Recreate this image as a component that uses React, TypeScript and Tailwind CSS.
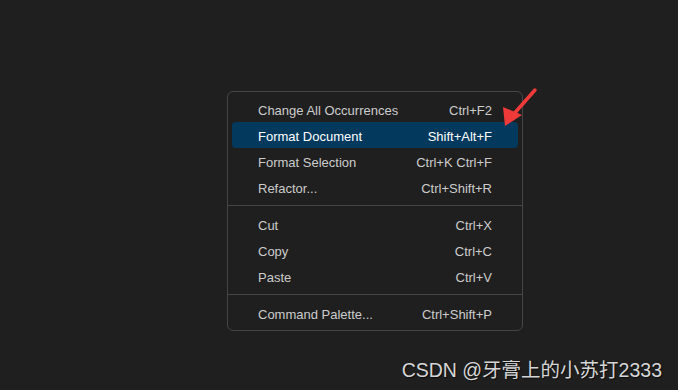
const items1 = [
  { label: 'Change All Occurrences', key: 'Ctrl+F2' },
  { label: 'Format Document', key: 'Shift+Alt+F', active: true },
  { label: 'Format Selection', key: 'Ctrl+K Ctrl+F' },
  { label: 'Refactor...', key: 'Ctrl+Shift+R' },
]
const items2 = [
  { label: 'Cut', key: 'Ctrl+X' },
  { label: 'Copy', key: 'Ctrl+C' },
  { label: 'Paste', key: 'Ctrl+V' },
]
const items3 = [{ label: 'Command Palette...', key: 'Ctrl+Shift+P' }]

type Item = { label: string; key: string; active?: boolean }

function Row({ item }: { item: Item }) {
  return (
    <div
      className={`flex h-[26px] items-center justify-between rounded-[4px] px-[26px] pt-[4px] ${
        item.active ? 'bg-[#04395e] text-white' : 'text-[#cccccc]'
      }`}
    >
      <span>{item.label}</span>
      <span>{item.key}</span>
    </div>
  )
}

function Separator() {
  return (
    <div className="-mx-[4px] flex h-[11px] items-start pt-[5px]">
      <div className="h-px w-full bg-[#454545]" />
    </div>
  )
}

export default function App() {
  return (
    <div
      className="relative h-[390px] w-[678px] overflow-hidden bg-[#1f1f1f] text-[13px]"
      style={{ fontFamily: '"Liberation Sans", Arial, sans-serif' }}
    >
      <div className="pl-[227px] pt-[91px]">
        {/* context menu */}
        <div className="w-[296px] rounded-[6px] border border-[#454545] bg-[#1f1f1f] p-[4px]">
          {items1.map((it) => (
            <Row key={it.label} item={it} />
          ))}
          <Separator />
          {items2.map((it) => (
            <Row key={it.label} item={it} />
          ))}
          <Separator />
          {items3.map((it) => (
            <Row key={it.label} item={it} />
          ))}
        </div>
      </div>

      {/* red annotation arrow */}
      <svg className="absolute left-0 top-0" width="678" height="390">
        <line x1="535" y1="90" x2="512" y2="116" stroke="#f03a3a" strokeWidth="3.5" strokeLinecap="round" />
        <polygon points="505,126 503,107 522,115" fill="#f03a3a" />
      </svg>

      {/* watermark */}
      <div
        className="absolute bottom-[5px] right-[16px] text-[19.5px] text-[#d6d6d6]"
        style={{ fontFamily: '"Liberation Sans", "Noto Sans CJK SC", sans-serif', textShadow: '1px 1px 1px rgba(0,0,0,0.6)' }}
      >
        CSDN @牙膏上的小苏打2333
      </div>
    </div>
  )
}
